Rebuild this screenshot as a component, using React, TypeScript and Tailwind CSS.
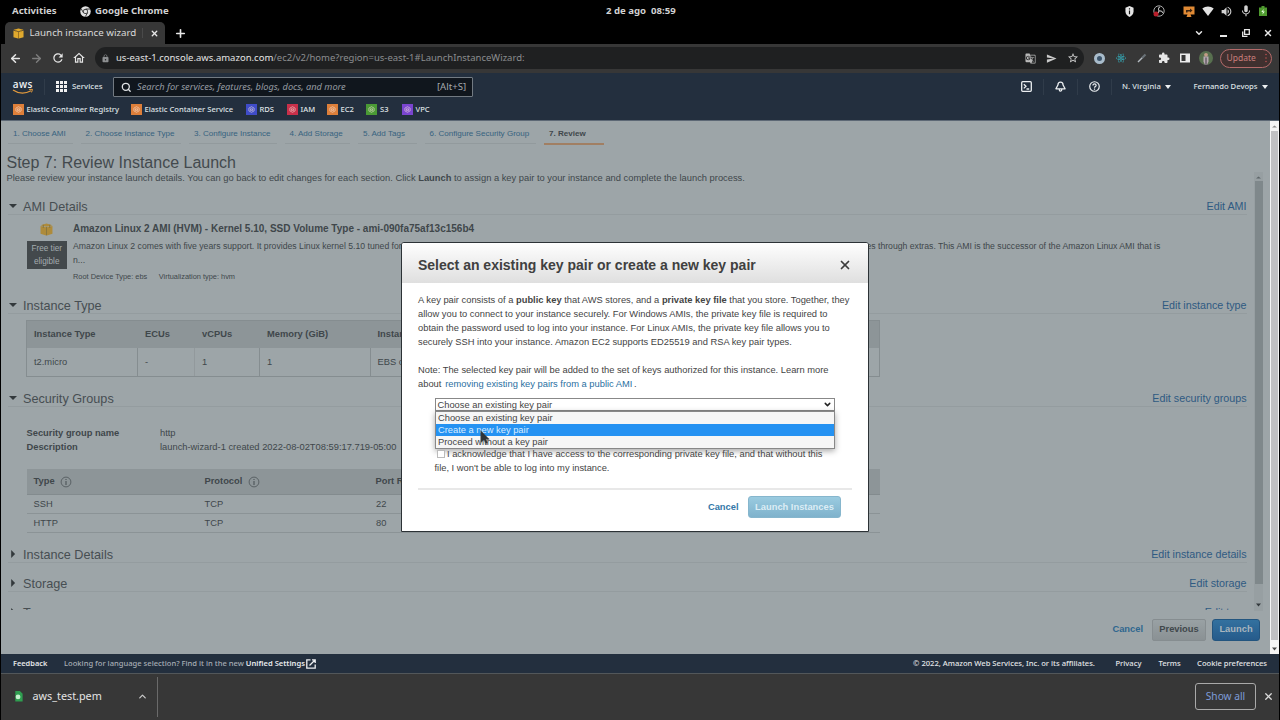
import type { ReactNode } from "react";
import { ArrowLeft, ArrowRight, ChevronDown, ChevronUp, Plus, Search, X } from "lucide-react";
import { MdExtension, MdGTranslate, MdLock, MdMic, MdOutlineHome, MdRefresh, MdSend, MdStarBorder, MdVolumeUp } from "react-icons/md";
import { FaReact } from "react-icons/fa";

const STEPS = [
  { label: "1. Choose AMI", width: "w-[72.5px]" },
  { label: "2. Choose Instance Type", width: "w-[108.500px]" },
  { label: "3. Configure Instance", width: "w-[95.5px]" },
  { label: "4. Add Storage", width: "w-[73.5px]" },
  { label: "5. Add Tags", width: "w-[66.5px]" },
  { label: "6. Configure Security Group", width: "w-[119.5px]" },
  { label: "7. Review", width: "w-[68px]" },
];

const BOOKMARKS = [
  { label: "Elastic Container Registry", color: "bg-[#dd7f3a]", width: "w-[118px]" },
  { label: "Elastic Container Service", color: "bg-[#dd7f3a]", width: "w-[115px]" },
  { label: "RDS", color: "bg-[#3f4cc8]", width: "w-[41px]" },
  { label: "IAM", color: "bg-[#c8304a]", width: "w-[40px]" },
  { label: "EC2", color: "bg-[#dd7f3a]", width: "w-[39.5px]" },
  { label: "S3", color: "bg-[#4a9a35]", width: "w-[35.5px]" },
  { label: "VPC", color: "bg-[#7a45cf]", width: "w-[40px]" },
];

const OPTIONS = ["Choose an existing key pair", "Create a new key pair", "Proceed without a key pair"];

function BoxIcon({ className = "", fill = "#e0a92e", dark = "#b57f17" }) {
  return (
    <svg viewBox="0 0 12 12" className={className}>
      <path d="M.5 2 6 .5 11.500 2 6 3.500z" fill={fill} />
      <path d="M.5 2.700 5.600 4v7.500L.5 10z" fill={fill} />
      <path d="M11.500 2.700 6.400 4v7.500L11.500 10z" fill={fill} />
      <path d="M3 1.600v2.900M9 1.600v2.900M6 3.700v7.800" stroke={dark} strokeWidth=".8" />
    </svg>
  );
}

function ChromeIcon({ className = "" }) {
  return (
    <svg viewBox="0 0 12 12" className={className}>
      <circle cx="6" cy="6" r="5.700" fill="#e2e2e2" />
      <path d="M6 3.300h5M3.700 7.300 1.300 3M8.300 7.300 5.900 11.500" stroke="#1a1a1a" strokeWidth=".9" />
      <circle cx="6" cy="6" r="2.700" fill="#1a1a1a" />
      <circle cx="6" cy="6" r="1.900" fill="#e2e2e2" />
    </svg>
  );
}

// Desktop top bar
function SystemBar() {
  return (
    <div className="flex h-[22px] items-center bg-black text-[9.600px] font-bold text-[#d2d2d2]">
      <span className="ml-[11px] w-[68px]">Activities</span>
      <ChromeIcon className="size-[11px]" />
      <span className="ml-[4px] w-[511px]">Google Chrome</span>
      <span className="whitespace-nowrap">2 de ago&nbsp; 08:59</span>
      <div className="ml-auto mr-[12px] flex items-center">
        <svg viewBox="0 0 10 12" className="mr-[19px] h-[11px] w-[9px]">
          <path d="M5 0 9.500 1.700V6c0 3-2 5-4.500 6C2.500 11 .5 9 .5 6V1.700z" fill="#e4e4e4" />
          <path d="M5 2.500v1.200M5 5v4" stroke="#111" strokeWidth="1.300" />
        </svg>
        <svg viewBox="0 0 12 12" className="mr-[18px] size-[12px]" fill="none">
          <circle cx="6" cy="6" r="5.200" stroke="#a9a9a9" strokeWidth="1" />
          <path d="M6 6c-1-2-.5-3.500 1-4M6 6c2-.5 3.500.5 3.800 2M6 6c-.5 2-2 3-3.800 2.500" stroke="#b9b9b9" strokeWidth="1.100" />
          <circle cx="3" cy="9" r="2.500" fill="#b81f2b" />
        </svg>
        <svg viewBox="0 0 12 11" className="mr-[7px] h-[11px] w-[12px]">
          <path d="M.5.5h11v8H7.500L8.500 11h-5l1-2.500h-4z" fill="#e08a35" />
          <path d="M3 6.500V4h4V2.500L9.500 4.600 7 6.500V5.500H4.500v1z" fill="#3a2412" />
        </svg>
        <svg viewBox="0 0 12 10" className="mr-[6.500px] h-[10px] w-[12px]">
          <path d="M6 10 .3 2.500C3.500-.3 8.500-.3 11.700 2.500z" fill="#e2e2e2" />
        </svg>
        <MdVolumeUp className="mr-[5.500px] size-[13px]" />
        <MdMic className="mr-[6.500px] size-[14px]" />
        <svg viewBox="0 0 8 10" className="h-[10px] w-[8px]">
          <path d="M2.500 0h3v1.500H8V10H0V1.500h2.500z" fill="#4f9a2f" />
          <path d="M4.600 3 2.300 6h1.500L3.500 8.500 5.800 5.500H4.300z" fill="#e8ffe0" />
        </svg>
      </div>
    </div>
  );
}

function TabStrip() {
  return (
    <div className="flex h-[22px] items-center bg-black text-[#e8e8e8]">
      <div className="ml-[4px] flex h-full w-[160px] items-center rounded-t-[5px] bg-[#373737]">
        <BoxIcon className="ml-[8px] size-[11px]" />
        <span className="ml-[5.500px] w-[112px] whitespace-nowrap text-[9.750px] text-[#d9d9d9]">Launch instance wizard</span>
        <div className="h-[10px] w-px bg-[#4a4a4a]" />
        <X className="ml-[7px] size-[9px]" strokeWidth={3.6} />
      </div>
      <Plus className="ml-[8.500px] size-[13px]" strokeWidth={3} />
      <div className="ml-auto mr-[6.500px] flex items-center">
        <ChevronDown className="mr-[16px] size-[10px]" strokeWidth={3.5} />
        <div className="mr-[15px] mt-[6px] h-[1.500px] w-[7px] bg-[#e8e8e8]" />
        <svg viewBox="0 0 8 8" className="mr-[12.500px] size-[8px]" fill="none" stroke="#e8e8e8" strokeWidth="1.300">
          <path d="M2.600.7h4.700v4.700H2.600z" />
          <path d="M.7 2.500v4.800h4.800" />
        </svg>
        <X className="size-[10px]" strokeWidth={3.4} />
      </div>
    </div>
  );
}

function AddressBar() {
  return (
    <div className="flex h-[29px] items-center bg-[#373737] pb-[1px] text-[#e6e6e6]">
      <ArrowLeft className="ml-[7.500px] size-[13px]" strokeWidth={2.8} />
      <ArrowRight className="ml-[8.500px] size-[13px] text-[#7d7d7d]" strokeWidth={2.600} />
      <MdRefresh className="ml-[7.500px] size-[14px]" />
      <MdOutlineHome className="ml-[7px] size-[14px]" />
      <div className="ml-[9px] flex h-[22px] w-[989px] items-center rounded-full bg-[#1f2021]">
        <MdLock className="ml-[6px] size-[9px] text-[#8d8f91]" />
        <span className="ml-[6.500px] whitespace-nowrap text-[9.500px] text-[#e3e3e3]">
          us-east-1.console.aws.amazon.com
          <span className="text-[#8b8d8f]">/ec2/v2/home?region=us-east-1#LaunchInstanceWizard:</span>
        </span>
        <MdGTranslate className="ml-auto size-[11px] text-[#b9b9b9]" />
        <MdSend className="ml-[10.500px] size-[11px] text-[#c9c9c9]" />
        <MdStarBorder className="mr-[5px] ml-[9.500px] size-[12px] text-[#d2d2d2]" />
      </div>
      <div className="ml-[10px] size-[11px] rounded-full border-[3px] border-[#a9bccb] bg-[#3d556c]" />
      <FaReact className="ml-[11px] size-[10px] text-[#35b5c4]" />
      <svg viewBox="0 0 10 10" className="ml-[11px] size-[10px]" fill="none">
        <path d="M1 9 5.500 4.500" stroke="#b5bcc2" strokeWidth="1.500" />
        <path d="M5 5 8.500 1.500" stroke="#6a7278" strokeWidth="2.200" />
      </svg>
      <MdExtension className="ml-[11px] size-[12px]" />
      <svg viewBox="0 0 10 10" className="ml-[10.500px] size-[10px]">
        <path d="M0 .5h10v9H0zM1.500 2v6h4V2z" fill="#ececec" fillRule="evenodd" />
      </svg>
      <svg viewBox="0 0 14 14" className="ml-[8.500px] size-[14px]">
        <circle cx="7" cy="7" r="7" fill="#58704f" />
        <circle cx="7" cy="3.800" r="1.900" fill="#c39c86" />
        <path d="M4.500 5.500h5v5L8 14H6l-1.500-3.500z" fill="#b7a9b1" />
        <path d="M7 6.500V14" stroke="#3e3a45" />
      </svg>
      <div className="ml-[7px] flex h-[19px] w-[52px] items-center rounded-full border border-[#b46a6a] bg-[#40302f] text-[8.500px] text-[#c97e7c]">
        <span className="ml-[6px] w-[34px]">Update</span>
        <svg viewBox="0 0 2 10" className="ml-[4px] h-[10px] w-[2px]" fill="#b5504f">
          <circle cx="1" cy="1.500" r=".8" />
          <circle cx="1" cy="5" r=".8" />
          <circle cx="1" cy="8.500" r=".8" />
        </svg>
      </div>
    </div>
  );
}

function AwsNav() {
  return (
    <div className="h-[47px] bg-[#232f3e] text-[#dfe2e5]">
      <div className="flex h-[27px] items-center text-[7.800px]">
        <svg viewBox="0 0 22 17" className="ml-[11px] h-[17px] w-[22px] overflow-visible">
          <text x="0.800" y="9.500" fontFamily="Open Sans, sans-serif" fontSize="10" fontWeight="600" fill="#eef0f2" textLength="19.500">aws</text>
          <path d="M1 12c5.500 3.700 12.500 3.800 18 .8" stroke="#e39a3c" strokeWidth="1.300" fill="none" />
          <path d="M17 11.400h3.500l-1 3" stroke="#e39a3c" strokeWidth="1" fill="none" />
        </svg>
        <div className="ml-[10px] h-[16px] w-px bg-[#303c4a]" />
        <div className="ml-[11px] grid grid-cols-3 gap-[1.500px]">
          {Array.from({ length: 9 }, (_, i) => (
            <div key={i} className="size-[2.700px] bg-[#f1f1f1]" />
          ))}
        </div>
        <span className="ml-[5px] w-[41px] font-medium">Services</span>
        <div className="mt-[1px] flex h-[20px] w-[360px] items-center rounded-[1px] border border-[#727a82] bg-[#10161d]">
          <Search className="ml-[7px] size-[10.500px]" strokeWidth={3} />
          <span className="ml-[5.500px] text-[9.230px] italic text-[#969ca2]">Search for services, features, blogs, docs, and more</span>
          <span className="mr-[6px] ml-auto text-[9.600px] text-[#a4a9ad]">[Alt+S]</span>
        </div>
        <svg viewBox="0 0 11 11" className="ml-auto size-[11px]" fill="none" stroke="#eceff1" strokeWidth="1.300">
          <rect x=".7" y=".7" width="9.600" height="9.600" rx="1" />
          <path d="M2.800 3.200 5 5.300 2.800 7.400M5.500 8h2.700" />
        </svg>
        <div className="ml-[11px] h-[16px] w-px bg-[#303c4a]" />
        <svg viewBox="0 0 12 12" className="ml-[11px] size-[11px]" fill="none" stroke="#eceff1" strokeWidth="1.400" strokeLinejoin="round">
          <path d="M6 1.200c-2 0-2.800 1.400-2.800 3.200L1 8.500h10L8.800 4.400C8.800 2.600 8 1.200 6 1.200zM4.600 9c0 2.800 2.800 2.800 2.800 0" />
        </svg>
        <div className="ml-[11px] h-[16px] w-px bg-[#303c4a]" />
        <svg viewBox="0 0 12 12" className="ml-[10.500px] size-[11px]" fill="none" stroke="#eceff1" strokeWidth="1.300">
          <circle cx="6" cy="6" r="5.200" />
          <path d="M4.300 4.800c0-2.200 3.500-2.200 3.500 0C7.800 6 6 6 6 7.300M6 8.200v1.300" />
        </svg>
        <div className="ml-[11px] h-[16px] w-px bg-[#303c4a]" />
        <span className="ml-[10.500px] w-[43px] text-[7.670px] font-medium whitespace-nowrap tracking-[0.080px]">N. Virginia</span>
        <Triangle className="size-[6px] text-[#eceff1]" />
        <span className="ml-[22.500px] w-[66px] whitespace-nowrap text-[7.670px] font-medium">Fernando Devops</span>
        <Triangle className="mr-[11.500px] ml-[2px] size-[6px] text-[#eceff1]" />
      </div>
      <div className="flex h-[20px] items-center text-[7.600px] font-medium">
        <div className="w-[11.500px]" />
        {BOOKMARKS.map((item) => (
          <div key={item.label} className={`flex items-center whitespace-nowrap ${item.width}`}>
            <div className={`mr-[3px] flex size-[11px] shrink-0 items-center justify-center ${item.color}`}>
              <svg viewBox="0 0 8 8" className="size-[7px]" fill="none" stroke="#f7e6da" strokeOpacity=".7" strokeWidth=".9">
                <path d="M4 .8 7 2.400v3.200L4 7.200 1 5.600V2.400z" />
                <path d="M2.800 3.200h2.400v1.800H2.800z" />
              </svg>
            </div>
            {item.label}
          </div>
        ))}
      </div>
    </div>
  );
}

function Triangle({ className = "", direction = "down" }: { className?: string; direction?: "down" | "right" | "up" }) {
  const paths = { down: "M0 1.500h10L5 8.500z", right: "M2 0 8.500 5 2 10z", up: "M0 8.500h10L5 1.500z" };
  return (
    <svg viewBox="0 0 10 10" className={className} fill="currentColor" preserveAspectRatio="none">
      <path d={paths[direction]} />
    </svg>
  );
}

function SectionHeader({ title, edit, open = true, className = "" }: { title: string; edit: string; open?: boolean; className?: string }) {
  return (
    <div className={`ml-[7px] flex h-[17px] w-[1238.500px] shrink-0 items-center border-b border-[#949c9f] ${className}`}>
      <Triangle
        direction={open ? "down" : "right"}
        className={open ? "ml-[1px] h-[6px] w-[8px] text-[#33393c]" : "ml-[2px] h-[8px] w-[6px] text-[#33393c]"}
      />
      <span className={`pt-[2.500px] text-[12.670px] text-[#474e52] ${open ? "ml-[6px]" : "ml-[7px]"}`}>{title}</span>
      <span className="ml-auto text-[10.720px] text-[#2f5a82]">{edit}</span>
    </div>
  );
}

function Th({ children, className }: { children?: ReactNode; className: string }) {
  return <div className={`flex items-center ${className}`}>{children}</div>;
}

function Info() {
  return (
    <svg viewBox="0 0 12 12" className="ml-[5.500px] size-[12px]" fill="none" stroke="#4c5458">
      <circle cx="6" cy="6" r="4.900" strokeWidth=".8" />
      <path d="M6 3v1M6 5v4" strokeWidth="1.100" />
    </svg>
  );
}

function ReviewPage() {
  return (
    <div className="flex h-full w-[1269px] flex-col bg-[#9da5a8] font-['Liberation_Sans',Arial,sans-serif] text-[9.330px] text-[#40474b]">
      <div className="ml-[7px] flex h-[24px] shrink-0 text-[8.050px] text-[#37637f]">
        {STEPS.map((step, i) => (
          <div key={step.label} className={step.width}>
            <div
              className={
                i === 6
                  ? "mr-[8px] h-[24px] border-b-2 border-[#a17f63] pl-[5px] leading-[26px] font-bold text-[#40474b]"
                  : "mr-[8px] h-[23px] border-b border-[#929a9d] pl-[5px] leading-[26px] whitespace-nowrap"
              }
            >
              {step.label}
            </div>
          </div>
        ))}
      </div>
      <h1 className="mt-[9px] ml-[5.500px] h-[18px] text-[16px] leading-[18px] text-[#434a4e]">Step 7: Review Instance Launch</h1>
      <p className="ml-[5.500px] h-[12px] leading-[12px]">
        Please review your instance launch details. You can go back to edit changes for each section. Click <b>Launch</b> to assign a key pair to your instance and complete the launch process.
      </p>
      <div className="-mt-[12px] flex h-[439px] shrink-0">
        <div className="flex h-[438px] w-[1253px] flex-col overflow-hidden pt-[26px]">
          <SectionHeader title="AMI Details" edit="Edit AMI" />
          <div className="ml-[25.500px] flex h-[82px] shrink-0">
            <div className="w-[40.500px] text-center text-[8.200px]">
              <BoxIcon className="mx-auto mt-[8px] mb-[5px] size-[13px]" fill="#ae8b3b" dark="#85702f" />
              <div className="bg-[#43494c] pt-[0.500px] leading-[13.700px] text-[#a4acaf]">
                Free tier
                <br />
                eligible
              </div>
            </div>
            <div className="ml-[6px] w-[1100px]">
              <div className="mt-[7px] text-[10px] leading-[14px] font-bold">
                Amazon Linux 2 AMI (HVM) - Kernel 5.10, SSD Volume Type - ami-090fa75af13c156b4
              </div>
              <div className="mt-[3px] text-[8.685px] leading-[14px]">
                <div className="whitespace-nowrap">
                  Amazon Linux 2 comes with five years support. It provides Linux kernel 5.10 tuned for optimal performance on Amazon EC2, systemd 219, GCC 7.3, Glibc 2.26, Binutils 2.29.1, and the latest software packages through extras. This AMI is the successor of the Amazon Linux AMI that is
                </div>
                n...
              </div>
              <div className="mt-[3px] text-[7.400px] leading-[14px]">
                <span className="mr-[11.500px]">Root Device Type: ebs</span>
                <span>Virtualization type: hvm</span>
              </div>
            </div>
          </div>

          <SectionHeader title="Instance Type" edit="Edit instance type" />
          <div className="mt-[6px] ml-[25px] w-[854px] shrink-0 border border-[#858d90]">
            <div className="flex h-[27px] bg-[#8d9598] font-bold">
              <Th className="w-[111px] pl-[7px]">Instance Type</Th>
              <Th className="w-[57px] pl-[7px]">ECUs</Th>
              <Th className="w-[65px] pl-[7px]">vCPUs</Th>
              <Th className="w-[110.500px] pl-[7px]">Memory (GiB)</Th>
              <Th className="pl-[7px]">Instance Storage (GB)</Th>
            </div>
            <div className="flex h-[28px]">
              <Th className="w-[111px] border-r border-[#858d90] pt-[2px] pl-[7px]">t2.micro</Th>
              <Th className="w-[57px] border-r border-[#92999c] pt-[2px] pl-[7px]">-</Th>
              <Th className="w-[65px] border-r border-[#858d90] pt-[2px] pl-[7px]">1</Th>
              <Th className="w-[110.500px] border-r border-[#858d90] pt-[2px] pl-[7px]">1</Th>
              <Th className="pt-[2px] pl-[7px]">EBS only</Th>
            </div>
          </div>

          <SectionHeader title="Security Groups" edit="Edit security groups" className="mt-[13px]" />
          <div className="mt-[19px] ml-[25.500px] grid shrink-0 grid-cols-[133.500px_auto] leading-[14px]">
            <b>Security group name</b>
            <span>http</span>
            <b>Description</b>
            <span>launch-wizard-1 created 2022-08-02T08:59:17.719-05:00</span>
          </div>
          <div className="mt-[15px] ml-[25.500px] w-[853px] shrink-0">
            <div className="flex h-[26px] border-b border-[#838b8e] bg-[#8d9598] font-bold">
              <Th className="w-[171px] pl-[7px]">Type <Info /></Th>
              <Th className="w-[171px] pl-[7px]">Protocol <Info /></Th>
              <Th className="pl-[7px]">Port Range <Info /></Th>
            </div>
            {[["SSH", "22"], ["HTTP", "80"]].map(([type, port]) => (
              <div key={type} className="flex h-[19px] border-b border-[#8b9396] pt-[2.500px]">
                <Th className="w-[171px] pl-[7px]">{type}</Th>
                <Th className="w-[171px] pl-[7px]">TCP</Th>
                <Th className="pl-[7.500px]">{port}</Th>
              </div>
            ))}
          </div>

          <SectionHeader title="Instance Details" edit="Edit instance details" open={false} className="mt-[13px]" />
          <SectionHeader title="Storage" edit="Edit storage" open={false} className="mt-[12px]" />
          <SectionHeader title="Tags" edit="Edit tags" open={false} className="mt-[12px]" />
        </div>
        <div className="flex w-[9px] flex-col items-center bg-[#979fa2]">
          <Triangle direction="up" className="mt-[4px] h-[3px] w-[5px] text-[#5d6568]" />
          <div className="mt-[2px] h-[403px] w-[8px] bg-[#7f888b]" />
          <Triangle className="mt-[19px] h-[4px] w-[5px] text-[#33393c]" />
        </div>
      </div>
      <div className="mt-[7.500px] mr-[10px] flex h-[22px] items-center justify-end font-bold">
        <span className="mr-[9px] text-[#2f678f]">Cancel</span>
        <div className="mr-[6px] flex h-full w-[54px] items-center justify-center rounded-[2px] border border-[#868d90] bg-linear-to-b from-[#99a1a4] to-[#8a9194]">Previous</div>
        <div className="flex h-full w-[48px] items-center justify-center rounded-[3px] border border-[#23557f] bg-linear-to-b from-[#33719f] to-[#265b8b] text-[#a9b5be]">Launch</div>
      </div>
    </div>
  );
}

function KeyPairModal() {
  return (
    <div className="absolute top-[242px] left-[401px] h-[290px] w-[468px] rounded-t-[3px] border border-[#2c3236] bg-white font-['Liberation_Sans',Arial,sans-serif] text-[9.330px] leading-[14px] text-[#444]">
      <div className="flex h-[40px] items-center justify-between rounded-t-[2px] bg-linear-to-b from-[#fefefe] to-[#dfdfdf] pt-[4px] pr-[16px] pl-[16px]">
        <h2 className="text-[14px] font-bold text-[#404040]">Select an existing key pair or create a new key pair</h2>
        <X className="size-[14px] text-[#3c3c3c]" strokeWidth={3} />
      </div>
      <div className="px-[16px] pt-[10px] whitespace-nowrap">
        <p>
          A key pair consists of a <b>public key</b> that AWS stores, and a <b>private key file</b> that you store. Together, they
          <br />
          allow you to connect to your instance securely. For Windows AMIs, the private key file is required to
          <br />
          obtain the password used to log into your instance. For Linux AMIs, the private key file allows you to
          <br />
          securely SSH into your instance. Amazon EC2 supports ED25519 and RSA key pair types.
        </p>
        <p className="mt-[14px]">
          Note: The selected key pair will be added to the set of keys authorized for this instance. Learn more
          <br />
          about <span className="ml-[1.300px] text-[#2a6f9f]">removing existing key pairs from a public AMI</span>
          <span className="ml-[1.500px]">.</span>
        </p>
        <div className="mt-[7px] ml-[16.500px] w-[400px]">
          <div className="flex h-[13px] items-center justify-between border border-[#888] px-[2px]">
            <span>{OPTIONS[0]}</span>
            <ChevronDown className="size-[9px] text-[#222]" strokeWidth={4} />
          </div>
          <div className="h-[38px] border border-[#888] bg-[#f6f6f6] leading-[12px] shadow-[0_2px_6px_rgba(0,0,0,0.35)]">
            {OPTIONS.map((option, i) => (
              <div key={option} className={i === 1 ? "h-[12px] bg-[#2592f2] px-[2.500px] text-[#d9ecff]" : "h-[12px] px-[2.500px]"}>
                {option}
              </div>
            ))}
          </div>
          <p className="-mt-[2px]">
            <span className="mr-[2px] ml-[2px] inline-block size-[8.500px] border border-[#bbb] bg-white align-[-1px]" />
            I acknowledge that I have access to the corresponding private key file, and that without this
            <br />
            file, I won't be able to log into my instance.
          </p>
        </div>
        <div className="mt-[12.500px] h-[2px] w-[434px] bg-[#e8e8e8]" />
        <div className="mt-[6px] flex h-[22px] items-center justify-end pr-[11px] font-bold">
          <span className="mr-[9.500px] text-[#3477a8]">Cancel</span>
          <div className="flex h-full w-[93px] items-center justify-center rounded-[3px] border border-[#86b6cd] bg-linear-to-b from-[#9acbe0] to-[#7fb2cc] text-[#dcedf5]">
            Launch Instances
          </div>
        </div>
      </div>
      <svg viewBox="0 0 9 13" className="absolute top-[187px] left-[78px] h-[14px] w-[10px]">
        <path d="M.5.500 8.500 8.500H5.500L7 12l-1.800.8L3.600 9.300.5 11.500z" fill="#2f3337" stroke="#5c6063" strokeWidth=".4" />
      </svg>
    </div>
  );
}

function Footer() {
  return (
    <div className="flex h-[19px] items-center bg-[#232f3e] text-[7.600px] font-medium text-[#e4e6e8]">
      <span className="ml-[12px] w-[51px] text-[7.400px] font-semibold">Feedback</span>
      <span className="text-[#a6adb4]">
        Looking for language selection? Find it in the new <span className="font-semibold text-[#e9ebed]">Unified Settings</span>
      </span>
      <svg viewBox="0 0 10 10" className="ml-[1.500px] size-[10px]" fill="none" stroke="#eef0f2" strokeWidth="1.300">
        <path d="M4.500.8H.8v8.400h8.400V5.500M6 .8h3.200V4M9 1 3.500 6.500" />
      </svg>
      <span className="ml-auto">© 2022, Amazon Web Services, Inc. or its affiliates.</span>
      <span className="ml-[20.500px]">Privacy</span>
      <span className="ml-[17px]">Terms</span>
      <span className="mr-[12px] ml-[16.500px]">Cookie preferences</span>
    </div>
  );
}

function DownloadsBar() {
  return (
    <div className="flex h-[47px] items-center border-t border-[#52575a] bg-[#373737] pb-[1px]">
      <svg viewBox="0 0 9 12" className="ml-[13px] h-[11px] w-[9px]">
        <path d="M1 0h5l3 3v8.500H1z" fill="#2f9e50" />
        <circle cx="4" cy="6.500" r="2.600" fill="#c6f0ce" />
      </svg>
      <span className="ml-[9.500px] w-[104px] text-[10.800px] text-[#e4e4e4]">aws_test.pem</span>
      <ChevronUp className="size-[11px] text-[#c9c9c9]" strokeWidth={2.800} />
      <div className="ml-[9px] h-[40px] w-px bg-[#6a6a6a]" />
      <div className="ml-auto flex h-[27px] w-[61px] items-center justify-center rounded-[3px] border border-[#a9a9a9] text-[10.200px] text-[#7e9cd8]">Show all</div>
      <X className="mr-[5px] ml-[7px] size-[11px] text-[#dadada]" strokeWidth={2.800} />
    </div>
  );
}

export default function App() {
  return (
    <div className="relative h-[720px] w-[1280px] overflow-hidden bg-black px-px font-['Noto_Sans','Open_Sans',sans-serif]">
      <SystemBar />
      <TabStrip />
      <AddressBar />
      <AwsNav />
      <div className="flex h-[534px] border-t border-[#5d6875]">
        <ReviewPage />
        <div className="flex w-[9px] flex-col items-center bg-[#f4f4f4] text-[#4a4a4a]">
          <Triangle direction="up" className="mt-[4px] h-[3px] w-[5px] text-[#8a8a8a]" />
          <div className="mt-[3px] h-[509px] w-[7px] bg-[#c0c0c2]" />
          <Triangle className="mt-[6.500px] h-[4px] w-[5px]" />
        </div>
      </div>
      <Footer />
      <DownloadsBar />
      <KeyPairModal />
    </div>
  );
}
